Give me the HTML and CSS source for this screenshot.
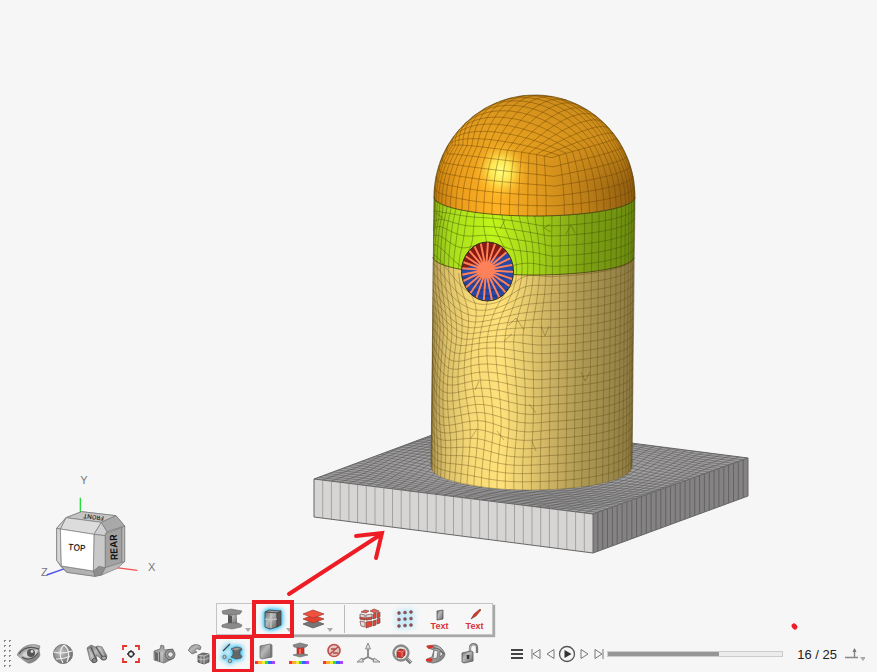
FILE: index.html
```html
<!DOCTYPE html>
<html lang="en">
<head>
  <meta charset="UTF-8">
  <meta name="viewport" content="width=device-width, initial-scale=1.0">
  <title>Model Viewer</title>
  <link rel="stylesheet" href="styles.css">
</head>
<body>
  <main class="viewer">
    <section class="stage">
      <svg class="scene" viewBox="0 0 877 600" role="img" aria-label="Meshed vessel model on a base plate">
        <defs>
          <linearGradient id="tan" gradientUnits="userSpaceOnUse" x1="432" y1="0" x2="635" y2="0">
            <stop offset="0" stop-color="#b39a55"/><stop offset=".07" stop-color="#dcc16b"/><stop offset=".2" stop-color="#f8da76"/>
            <stop offset=".34" stop-color="#ffe17b"/><stop offset=".46" stop-color="#e8cc6f"/><stop offset=".58" stop-color="#ccb263"/>
            <stop offset=".74" stop-color="#ae9953"/><stop offset="1" stop-color="#8b7943"/>
          </linearGradient>
          <linearGradient id="green" gradientUnits="userSpaceOnUse" x1="432" y1="0" x2="635" y2="0">
            <stop offset="0" stop-color="#8db51a"/><stop offset=".1" stop-color="#abdf1d"/><stop offset=".3" stop-color="#c0f51b"/>
            <stop offset=".5" stop-color="#a5d31b"/><stop offset=".75" stop-color="#7da012"/><stop offset="1" stop-color="#6c8b10"/>
          </linearGradient>
          <linearGradient id="orange" gradientUnits="userSpaceOnUse" x1="434" y1="190" x2="636" y2="175">
            <stop offset="0" stop-color="#c07c10"/><stop offset=".12" stop-color="#eb9d1c"/><stop offset=".3" stop-color="#ffb324"/>
            <stop offset=".5" stop-color="#e39c1e"/><stop offset=".75" stop-color="#ba7d18"/><stop offset="1" stop-color="#8d5b10"/>
          </linearGradient>
          <linearGradient id="domeTop" x1="0" y1="0" x2="0" y2="1">
            <stop offset="0" stop-color="#cc8c1b" stop-opacity=".85"/><stop offset=".35" stop-color="#e09c1e" stop-opacity=".7"/><stop offset=".75" stop-color="#dc991d" stop-opacity="0"/>
          </linearGradient>
          <radialGradient id="shine">
            <stop offset="0" stop-color="#ffff80"/><stop offset=".4" stop-color="#fff05a" stop-opacity=".85"/><stop offset="1" stop-color="#ffb52a" stop-opacity="0"/>
          </radialGradient>
          <clipPath id="greenClip"><path d="M434 197A100.500 19 0 0 0 635 197L634 257A100.500 18 0 0 1 433 257Z"/></clipPath>
          <clipPath id="tanClip"><path d="M433 257A100.500 18 0 0 0 634 257L632 467A100.500 23 0 0 1 431 467Z"/></clipPath>
          <clipPath id="plateClip"><path d="M314 479L467 422L748 458L593 514Z"/></clipPath>
          <clipPath id="holeClip"><ellipse cx="487.500" cy="271.500" rx="26" ry="29.500"/></clipPath>
        </defs>

        <g class="plate">
          <path class="plate-top" d="M314 479L467 422L748 458L593 514Z"/>
          <path class="plate-front" d="M314 479L593 514V553L314 517Z"/>
          <path class="plate-side" d="M593 514L748 458V496L593 553Z"/>
          <g clip-path="url(#plateClip)"><path id="plateMesh" class="mesh mesh-plate"/></g>
          <path id="frontMesh" class="mesh mesh-front"/>
          <path id="sideMesh" class="mesh mesh-side"/>
          <path class="plate-edge" d="M314 517V479L593 514L748 458V496L593 553V514M314 517L593 553M314 479L467 422L748 458"/>
        </g>

        <g class="vessel">
          <path fill="url(#tan)" d="M433 250H634L632 467A100.500 23 0 0 1 431 467Z"/>
          <g clip-path="url(#tanClip)"><path id="tanMesh" class="mesh mesh-tan"/></g>
          <path fill="url(#green)" d="M434 190H635L634 257A100.500 18 0 0 1 433 257Z"/>
          <g clip-path="url(#greenClip)"><path id="greenMesh" class="mesh mesh-green"/></g>
          <path fill="url(#orange)" d="M434 197C434 141 479 95 535 95S635 141 635 197A100.500 19 0 0 1 434 197Z"/>
          <path fill="url(#domeTop)" d="M434 197C434 141 479 95 535 95S635 141 635 197A100.500 19 0 0 1 434 197Z"/>
          <ellipse cx="501" cy="171" rx="27" ry="29" fill="url(#shine)"/>
          <path id="domeMesh" class="mesh mesh-dome"/>
          <path class="seam" d="M434 197A100.500 19 0 0 0 635 197M433 257A100.500 18 0 0 0 634 257"/>
          <path class="outline" d="M431 467L434 197C434 141 479 95 535 95S635 141 635 197L632 467"/>
        </g>

        <g clip-path="url(#holeClip)">
          <rect x="460" y="240" width="56" height="64" fill="#2948a5"/>
          <path fill="#851b12" d="M460 240H516L504 254L487 262L476 264L460 270Z"/>
          <path class="hole-rows" d="M460 278H516M460 284H516M460 290H516M460 296H516"/>
          <path id="spokes" class="spokes"/>
          <circle cx="486" cy="270" r="8.500" fill="#ff8159"/>
        </g>
        <ellipse class="hole-edge" cx="487.500" cy="271.500" rx="26" ry="29.500"/>

        <g class="view-cube" transform="translate(30 465) scale(.33333)">
          <path stroke="#23e03a" d="M151 98V144"/>
          <path stroke="#f4504c" d="M258 308L322 316"/>
          <path stroke="#5050f0" d="M50 330L104 311"/>
          <path class="facet" fill="#b9b9b9" d="M155 140L258 152L284 183V290L262 310L215 330L195 334L110 322L92 304L80 286V190L108 158Z"/>
          <path class="facet" fill="#c5c5c5" d="M155 140L258 152L214 172L108 158Z"/>
          <path class="facet" fill="#dcdcdc" d="M108 158L214 172L192 208L91 192Z"/>
          <path class="facet" fill="#cfcfcf" d="M214 172L231 200L226 212L192 208Z"/>
          <path class="facet" fill="#a9a9a9" d="M214 172L258 152L284 183L231 200Z"/>
          <path class="facet" fill="#c9c9c9" d="M192 208L226 212V308L190 318Z"/>
          <path class="facet" fill="#a2a2a2" d="M226 206L276 187V292L226 308Z"/>
          <path class="facet" fill="#bcbcbc" d="M276 187L284 183V290L276 292Z"/>
          <path class="facet" fill="#d0d0d0" d="M108 158L91 192L80 190Z"/>
          <path class="facet" fill="#d6d6d6" d="M80 190L91 192L94 303L80 286Z"/>
          <path class="facet" fill="#b2b2b2" d="M94 303L190 318L195 334L110 322Z"/>
          <path class="facet" fill="#8e8e8e" d="M190 318L207 304L226 308L215 330L195 334Z"/>
          <path class="facet" fill="#fff" d="M91 192L192 208L190 318L94 303Z"/>
          <text class="face-name" x="114" y="257" transform="rotate(4 140 250)">TOP</text>
          <text class="face-name face-side" transform="translate(263 285) rotate(-92)">REAR</text>
          <text class="face-name face-top" transform="translate(222 154) rotate(187)">FRONT</text>
          <text class="axis" x="151" y="58">Y</text>
          <text class="axis" x="354" y="317">X</text>
          <text class="axis" x="33" y="333">Z</text>
        </g>
      </svg>
    </section>

    <div class="submenu" role="toolbar" aria-label="Element display">
      <button class="split" type="button" aria-label="1D elements">
        <span class="icon"><svg viewBox="0 0 24 24"><path fill="url(#steel)" d="M8 5h9v13H8z"/><path fill="#555" d="M8 8l4 1v10l-4-1z"/><path fill="#8a8a8a" stroke="#666" stroke-width=".6" d="M2 4l9-2 11 2-2 3-8 1-9-1zM2 18l6-2h10l4 2-1 2-9 2-10-2z"/></svg></span>
      </button>
      <button class="split" type="button" aria-label="2D elements">
        <span class="icon active marked"><svg viewBox="0 0 24 24"><path fill="#999" stroke="#444" stroke-width=".8" d="M4 5l4-2 12 1-4 2z"/><path fill="url(#steel)" stroke="#444" stroke-width=".8" d="M4 5l12 1v14l-7 2-5-2z"/><path fill="#555" stroke="#444" stroke-width=".8" d="M16 6l4-2v14l-4 2z"/><path stroke="#d0d0d0" d="M4 12l6 1 6-1M10 6v15" fill="none"/></svg></span>
      </button>
      <button class="split" type="button" aria-label="Layers">
        <span class="icon"><svg viewBox="0 0 24 24"><path fill="#777" stroke="#555" stroke-width=".7" d="M1 17l10-4 11 4-11 4z"/><path fill="#e4412f" stroke="#9c3a31" stroke-width=".7" d="M1 12l10-4 11 4-11 4z"/><path fill="#f0523f" stroke="#9c3a31" stroke-width=".7" d="M1 7l10-4 11 4-11 4z"/></svg></span>
      </button>
      <span class="divider"></span>
      <button class="plain" type="button" aria-label="Shrink elements">
        <span class="icon"><svg viewBox="0 0 24 24" stroke="#7a4a46" stroke-width=".7"><path fill="#ef5e50" d="M3 5l4-2 4 1-3 2zM12 4l4-2 5 2-4 2z"/><path fill="#dcdcdc" d="M2 7l5 1v5l-5-1zM8 8l6-1v5l-6 1zM2 14l5 1v5l-4-1z"/><path fill="#e34235" d="M8 15l6-1v5l-6 2zM15 7l3-1v5l-3 1zM19 6l3-1v5l-3 1zM15 14l3-1v5l-3 1zM19 12l3-1v5l-3 1zM2 10l5 1v2l-5-1zM8 11l6-1v2l-6 1z"/></svg></span>
      </button>
      <button class="plain" type="button" aria-label="Show nodes">
        <span class="icon active soft"><svg viewBox="0 0 24 24" fill="#a34a4b" stroke="#5b5560" stroke-width=".5"><circle cx="6" cy="6" r="1.500"/><circle cx="12" cy="5.500" r="1.500"/><circle cx="18" cy="5" r="1.500"/><circle cx="6" cy="12.500" r="1.500"/><circle cx="12" cy="12" r="1.500"/><circle cx="18" cy="11.500" r="1.500"/><circle cx="6" cy="19" r="1.500"/><circle cx="12" cy="18.500" r="1.500"/><circle cx="18" cy="18" r="1.500"/></svg></span>
      </button>
      <button class="plain labelled" type="button">
        <svg class="small-icon" viewBox="0 0 12 12"><path fill="url(#steel)" stroke="#444" stroke-width=".7" d="M3 2l6-1v9l-6 1z"/></svg>
        <span>Text</span>
      </button>
      <button class="plain labelled" type="button">
        <svg class="small-icon" viewBox="0 0 12 12"><path fill="#d5392c" stroke="#763a33" stroke-width=".6" d="M11 0L5 5l-3 5 5-3 5-6z"/></svg>
        <span>Text</span>
      </button>
    </div>

    <footer class="toolbar">
      <span class="grip"></span>
      <div class="tools" role="toolbar" aria-label="View">
        <button class="tool" type="button" aria-label="Show or hide"><span class="icon"><svg viewBox="0 0 24 24"><path fill="url(#steel)" stroke="#777" stroke-width=".6" d="M0 13C4 5 13 0 23 4l-1 4 1 5c-2 5-9 9-12 8C7 19 4 16 0 13z"/><path fill="#d4d4d4" d="M5 13c4-5 10-6 16-5-1 6-9 11-16 5z"/><circle cx="14" cy="11" r="4" fill="#555"/><circle cx="15" cy="9.500" r="1.400" fill="#ddd"/><path d="M2 12c5-7 12-8 20-5M5 15c5 4 12 2 16-4" fill="none" stroke="#555" stroke-width="1.200"/></svg></span></button>
        <button class="tool" type="button" aria-label="Global view"><span class="icon"><svg viewBox="0 0 24 24"><circle cx="12" cy="12" r="9.500" fill="url(#ball)" stroke="#777"/><path fill="none" stroke="#eee" stroke-width="1.200" d="M3 10c6 2 12 1 18-1M13 3c-5 5-5 12-1 18M13 3c5 4 6 11 3 17M5 17c5 0 10-1 14-3"/></svg></span></button>
        <button class="tool" type="button" aria-label="Find"><span class="icon"><svg viewBox="0 0 24 24"><path fill="url(#steel)" stroke="#666" stroke-width=".7" d="M2 6l4-3 4 2 3-1 4 1 5 9-1 3-4 1-3-3-3-2 1 6-4 2-3-3z"/><path stroke="#555" stroke-width="1.300" d="M6 5l5 12M11 5l7 11" fill="none"/><path stroke="#ccc" d="M4 7l4 10M14 6l5 8" fill="none"/><ellipse cx="9.500" cy="18.500" rx="2.500" ry="2" fill="#888" stroke="#555"/><ellipse cx="19" cy="16" rx="2.500" ry="2" fill="#aaa" stroke="#555"/></svg></span></button>
        <button class="tool" type="button" aria-label="Fit model"><span class="icon"><svg viewBox="0 0 24 24" fill="none"><path stroke="#e5342c" stroke-width="1.800" d="M4 8V4h4M16 4h4v4M4 16v4h4M16 20h4v-4"/><circle cx="12" cy="12" r="2.500" stroke="#333" stroke-width="1.300"/><path stroke="#333" stroke-width="1.300" d="M12 8V10M12 14v2M8 12H10M14 12h2"/></svg></span></button>
        <button class="tool" type="button" aria-label="Capture image"><span class="icon"><svg viewBox="0 0 24 24"><path fill="url(#steel)" stroke="#666" stroke-width=".7" d="M1 9l6-2 1-4 3 1v4l9-1 1 9-10 5-10-3z"/><path fill="#666" d="M2 10l3 1v8l-3-1zM6 10h1v10H6z"/><circle cx="17" cy="12.500" r="5" fill="#999" stroke="#555" stroke-width=".8"/><circle cx="17.500" cy="12.500" r="2.800" fill="#e5e5e5" stroke="#666"/><path stroke="#ccc" d="M9 10v10"/></svg></span></button>
        <button class="tool" type="button" aria-label="Rotate view"><span class="icon"><svg viewBox="0 0 24 24"><path fill="url(#steel)" stroke="#666" stroke-width=".7" d="M2 8C3 2 12 1 14 5l-1 3c-3-2-5-1-5 1l2 1-5 2-4-4z"/><path fill="#777" stroke="#444" stroke-width=".8" d="M11 13l5-2 6 1v8l-5 2-6-2z"/><path fill="none" stroke="#ccc" stroke-width=".8" d="M11 13l6 1 5-2M17 14v8M11 17l6 1 5-2M14 13v8"/></svg></span></button>
        <button class="tool" type="button" aria-label="Element representation"><span class="icon active marked"><svg viewBox="0 0 24 24"><path stroke="#444" stroke-width="1.300" d="M2 9l7-7"/><circle cx="3.500" cy="15" r="1.700" fill="#bbb" stroke="#666" stroke-width=".8"/><circle cx="9" cy="19" r="1.700" fill="#bbb" stroke="#666" stroke-width=".8"/><path fill="#666" stroke="#444" stroke-width=".6" d="M10 7l5-2 5 1 1 2-2 1v4l2 1-1 2-5 1-5-2 2-2v-4z"/><path fill="#999" d="M10.500 7.500l5-2 4 1-4 2z"/></svg></span></button>
        <button class="tool spectrum" type="button" aria-label="Colour by property"><span class="icon"><svg viewBox="0 0 24 24"><path fill="url(#steel)" stroke="#666" stroke-width=".7" d="M5 4l10-2 2 1v12L7 17l-2-1z"/><path fill="#777" d="M15 2l2 1v12l-2 1z"/></svg></span></button>
        <button class="tool spectrum" type="button" aria-label="Colour by section"><span class="icon"><svg viewBox="0 0 24 24"><path fill="#d63226" stroke="#7d3029" stroke-width=".6" d="M8 4h7v9H8z"/><path fill="#888" stroke="#666" stroke-width=".6" d="M4 3l7-2 8 2-2 2-6 1-6-1zM4 13l4-1h8l3 1-8 2z"/><path fill="#ee6e5f" d="M10 7h2v5h-2z"/></svg></span></button>
        <button class="tool spectrum" type="button" aria-label="Colour off"><span class="icon"><svg viewBox="0 0 24 24"><circle cx="11" cy="8.500" r="6" fill="#e0c6c3" stroke="#c4504b" stroke-width="1.700"/><path stroke="#b84a46" stroke-width="1.500" fill="none" d="M7 12L15 5M8 7h5M10 11h5"/></svg></span></button>
        <button class="tool" type="button" aria-label="Coordinate systems"><span class="icon"><svg viewBox="0 0 24 24"><path d="M11 6v9l-8 4M11 15l8 4" fill="none" stroke="#888" stroke-width="1.800"/><path fill="#ddd" stroke="#777" stroke-width=".8" d="M11 1l2.500 6h-5zM0 20l5-4 1.500 4zM23 20l-6-4-1 4z"/></svg></span></button>
        <button class="tool" type="button" aria-label="Inspect"><span class="icon"><svg viewBox="0 0 24 24"><path stroke="#777" stroke-width="3.500" d="M15 16l5 5"/><path stroke="#ccc" d="M16 16l5 5"/><circle cx="10" cy="11" r="7.500" fill="#e4e4e4" stroke="#888" stroke-width="2.300"/><path fill="#cf352b" stroke="#6b2d28" stroke-width=".7" d="M6 9l3-2 5 1v5l-3 3-5-1z"/><path stroke="#f09990" stroke-width=".8" fill="none" d="M6 9l5 1 3-2M11 10v5"/></svg></span></button>
        <button class="tool" type="button" aria-label="Measure"><span class="icon"><svg viewBox="0 0 24 24"><path fill="url(#steel)" stroke="#666" stroke-width=".8" d="M2 4l8-1c5 1 8 4 10 9-1 5-5 8-12 9l-6-1v-3l5-2 2-7-6-2z"/><path fill="#eee" stroke="#666" stroke-width=".8" d="M9 8l4 1-1 7-4 1zM15 9l3 3-3 3z"/><path fill="#d8342b" d="M1 4l6-1 2 2-5 2zM1 17l5-1 2 2-2 2-5-1z"/><path fill="none" stroke="#555" d="M8 6c5 0 8 2 11 6"/></svg></span></button>
        <button class="tool" type="button" aria-label="Lock view"><span class="icon"><svg viewBox="0 0 24 24"><path d="M11 10V6c0-5 7-5 7 0v5" fill="none" stroke="#777" stroke-width="2.300"/><path d="M11 9V6c0-4 6-4 6-1" fill="none" stroke="#ddd" stroke-width=".8"/><path fill="url(#steel)" stroke="#555" stroke-width=".8" d="M3 11l9-2 2 1v9l-9 2-2-1z"/><path fill="#333" d="M7.500 13h3l-.5 4h-2z"/></svg></span></button>
      </div>

      <div class="player">
        <button class="menu" type="button" aria-label="Menu"><svg viewBox="0 0 12 12"><path stroke="#444" stroke-width="2" d="M0 2h12M0 6h12M0 10h12"/></svg></button>
        <button class="step" type="button" aria-label="First"><svg viewBox="0 0 12 12"><path d="M2 1v10M10 1.500v9L3 6z"/></svg></button>
        <button class="step" type="button" aria-label="Previous"><svg viewBox="0 0 12 12"><path d="M9 1.500v9L2 6z"/></svg></button>
        <button class="play" type="button" aria-label="Play"><svg viewBox="0 0 18 18"><circle cx="9" cy="9" r="7.500" fill="none" stroke="#555" stroke-width="1.300"/><path fill="#333" d="M6.500 5l7 4-7 4z"/></svg></button>
        <button class="step" type="button" aria-label="Next"><svg viewBox="0 0 12 12"><path d="M3 1.500v9L10 6z"/></svg></button>
        <button class="step" type="button" aria-label="Last"><svg viewBox="0 0 12 12"><path d="M10 1v10M2 1.500v9L9 6z"/></svg></button>
        <input class="timeline" type="range" min="0" max="25" value="16" aria-label="Frame">
        <span class="frame">16 / 25</span>
        <button class="marker" type="button" aria-label="Frame options"><svg viewBox="0 0 20 14"><path d="M0 10.500h13M9.500 10V2" stroke="#888" stroke-width="1.400"/><path fill="#777" d="M9.500 1l2 4h-4z"/><path fill="#aaa" d="M15 10h6l-3 4z"/></svg></button>
      </div>
    </footer>

    <svg class="notes" viewBox="0 0 877 672" aria-hidden="true">
      <path d="M289 594L380 535M356 536L382 533L376 558"/>
      <path class="dot" d="M794 626l1 1"/>
    </svg>
  </main>

  <svg class="defs" width="0" height="0" aria-hidden="true">
    <defs>
      <linearGradient id="steel" x1="0" y1="0" x2="1" y2="1"><stop offset="0" stop-color="#707070"/><stop offset=".4" stop-color="#b8b8b8"/><stop offset="1" stop-color="#666"/></linearGradient>
      <radialGradient id="ball" cx=".4" cy=".4" r=".7"><stop offset="0" stop-color="#c5c5c5"/><stop offset="1" stop-color="#666"/></radialGradient>
    </defs>
  </svg>
  <script src="mesh.js"></script>
</body>
</html>
```

FILE: styles.css
```css
:root {
  --bg: #f6f6f6;
  --mark: #ee1c24;
  --glow: #35c4f8;
}

* {
  box-sizing: border-box;
}

body {
  margin: 0;
  background: var(--bg);
  color: #222;
  font-family: "Liberation Sans", Arial, sans-serif;
  font-size: 13px;
  overflow: hidden;
}

button {
  display: flex;
  align-items: center;
  justify-content: center;
  padding: 0;
  border: 0;
  background: none;
  color: inherit;
  font: inherit;
  cursor: pointer;
}

svg {
  display: block;
}

.viewer {
  position: relative;
  display: flex;
  flex-direction: column;
  min-height: 100vh;
}

.stage {
  flex: 1;
}

.scene {
  width: 100%;
}

/* model */
.mesh {
  fill: none;
  stroke-width: 1;
}

.mesh-tan { stroke: rgba(95, 75, 20, 0.38); }
.mesh-green { stroke: rgba(60, 82, 5, 0.42); }
.mesh-dome { stroke: rgba(100, 60, 0, 0.42); }
.mesh-plate { stroke: rgba(70, 70, 70, 0.42); }
.mesh-front { stroke: #a2a2a2; }
.mesh-side { stroke: #636363; }

.plate-top { fill: #a09e9f; }
.plate-front { fill: #d6d5d4; }
.plate-side { fill: #848282; }

.plate-edge {
  fill: none;
  stroke: #666;
}

.seam {
  fill: none;
  stroke: rgba(70, 62, 15, 0.8);
}

.outline {
  fill: none;
  stroke: rgba(80, 65, 25, 0.5);
}

.hole-edge {
  fill: none;
  stroke: #36331b;
}

.hole-rows {
  stroke: #1d3279;
}

.spokes {
  stroke: #ff8159;
  stroke-width: 2;
}

/* orientation cube */
.view-cube {
  stroke-width: 4;
}

.facet {
  stroke: #777;
  stroke-width: 2;
  stroke-linejoin: round;
}

.face-name {
  fill: #111;
  font-family: Inter, sans-serif;
  font-size: 26px;
  font-weight: 500;
}

.face-side {
  font-size: 29px;
  font-weight: 600;
}

.face-top {
  font-size: 18px;
}

.axis {
  fill: #777;
  font-size: 33px;
}

/* icons */
.icon {
  position: relative;
  display: block;
  width: 24px;
  height: 24px;
}

.active svg {
  filter: drop-shadow(0 0 2px var(--glow)) drop-shadow(0 0 2px var(--glow));
}

.soft svg {
  filter: drop-shadow(0 0 3px var(--glow));
}

.marked::after {
  content: "";
  position: absolute;
  inset: -7px -9px;
  z-index: 2;
  border: 4px solid var(--mark);
}

/* floating row */
.submenu {
  display: flex;
  align-self: flex-start;
  height: 32px;
  margin-left: 216px;
  border: 1px solid #c4c4c4;
  background: #f7f7f7;
  box-shadow: 2px 2px 1px #a8a8a8;
}

.split {
  position: relative;
  width: 41px;
  padding-left: 3px;
  justify-content: flex-start;
}

.split::after {
  content: "";
  position: absolute;
  right: 7px;
  bottom: 2px;
  border: 3px solid transparent;
  border-top: 4px solid #aaa;
  border-bottom: 0;
}

.divider {
  width: 1px;
  margin: 1px 7px 1px 4px;
  background: #bbb;
}

.plain {
  width: 35px;
}

.labelled {
  flex-direction: column;
  color: #d9303a;
  font-size: 9px;
  font-weight: bold;
  line-height: 10px;
}

.small-icon {
  width: 12px;
  height: 12px;
  margin-top: 2px;
}

/* bottom bar */
.toolbar {
  display: flex;
  align-items: center;
  height: 36px;
  margin-top: 1px;
}

.grip {
  width: 10px;
  height: 32px;
  margin: 0 0 0 2px;
  background: radial-gradient(circle, #888 1px, transparent 1px) 0 0 / 5px 5px;
}

.tools {
  display: flex;
}

.tool {
  position: relative;
  width: 34px;
  height: 36px;
}

.spectrum::after {
  content: "";
  position: absolute;
  left: 5px;
  bottom: 8px;
  width: 20px;
  height: 3px;
  background: linear-gradient(90deg, #f33 0 16%, #fa3 16% 33%, #ee3 33% 50%, #3d4 50% 66%, #36f 66% 83%, #a4f 83%);
}

.player {
  display: flex;
  flex: 1;
  align-items: center;
  padding: 0 12px 0 23px;
}

.menu {
  width: 12px;
  margin-right: 5px;
}

.menu svg {
  width: 12px;
}

.step {
  width: 15px;
}

.step svg {
  width: 12px;
  height: 12px;
  fill: none;
  stroke: #777;
}

.play svg {
  width: 18px;
  height: 18px;
}

.timeline {
  flex: 1;
  min-width: 60px;
  height: 6px;
  margin: 0 14px 0 1px;
  border: 1px solid #ccc;
  background: linear-gradient(90deg, #969696 64%, #ececec 64%);
  appearance: none;
}

.timeline::-webkit-slider-thumb {
  width: 1px;
  height: 4px;
  appearance: none;
}

.frame {
  margin-right: 8px;
  white-space: nowrap;
}

.marker svg {
  width: 20px;
  height: 14px;
}

/* hand drawn notes over the view */
.notes {
  position: absolute;
  top: 0;
  left: 0;
  width: 100%;
  fill: none;
  stroke: var(--mark);
  stroke-width: 4;
  stroke-linecap: round;
  pointer-events: none;
}

.dot {
  stroke-width: 5;
}

.defs {
  position: absolute;
}
```

FILE: mesh.js
```js
const rad = Math.PI / 180;

function setPath(id, lines) {
  const d = lines.map(line => "M" + line.map(p => p[0].toFixed(1) + " " + p[1].toFixed(1)).join("L")).join("");
  document.getElementById(id).setAttribute("d", d);
}

function lerp(a, b, t) {
  return [a[0] + (b[0] - a[0]) * t, a[1] + (b[1] - a[1]) * t];
}

// sample fn(t) for t in 0..1
function curve(fn, steps) {
  const line = [];
  for (let i = 0; i <= steps; i++) line.push(fn(i / steps));
  return line;
}

// push mesh lines away from the nozzle opening
function aroundHole(p) {
  const dx = p[0] - 487.5;
  const dy = (p[1] - 271.5) / 1.13;
  const r = Math.hypot(dx, dy) || 0.1;
  const reach = 68;
  if (r > reach) return p;
  const k = (18 + r * (1 - 18 / reach)) / r;
  return [487.5 + dx * k, 271.5 + dy * k * 1.13];
}

// point on the shell, deg from -90 (left) to 90 (right)
function shell(deg, y) {
  const free = Math.max(0, Math.min(1, (10 - deg) / 45)) * Math.max(0, Math.min(1, (470 - y) / 60)) * Math.min(1, (y - 190) / 40);
  const a = deg + free * 3 * Math.sin(y / 27 + deg / 20);
  const h = y + free * 7 * Math.sin(deg / 11 + y / 55);
  const t = (y - 197) / 270;
  const x = 534.5 - 3 * t + 100.5 * Math.sin(a * rad);
  return aroundHole([x, h + (19 + 4 * t) * Math.cos(a * rad)]);
}

function shellMesh(top, bottom, rows) {
  const lines = [];
  for (let a = -90; a <= 90; a += 5) {
    lines.push(curve(t => shell(a, top - 6 + (bottom - top + 12) * t), 60));
  }
  for (let i = 0; i <= rows; i++) {
    const y = top + (bottom - top) * i / rows;
    lines.push(curve(t => shell(-90 + 180 * t, y), 80));
  }
  return lines;
}

// short lines where the free mesh splits a quad
const splits = [
  [[545, 336], [541, 326]], [[545, 336], [549, 326]],
  [[585, 381], [581, 372]], [[585, 381], [590, 372]],
  [[536, 413], [529, 404]], [[536, 451], [532, 441]],
  [[479, 381], [475, 390]], [[477, 429], [471, 438]],
  [[497, 431], [504, 440]], [[508, 326], [516, 318]],
  [[516, 318], [524, 330]], [[504, 341], [512, 334]]
];
setPath("tanMesh", shellMesh(257, 467, 25).concat(splits));
setPath("greenMesh", shellMesh(197, 257, 6).concat([
  [[544, 228], [550, 224]], [[544, 228], [551, 232]],
  [[566, 234], [571, 225]], [[571, 225], [575, 233]],
  [[436, 213], [443, 218]], [[500, 229], [505, 220]]
]));

// dome: a square cap with one corner to the front, then rings down to the rim
function dome(phi, az) {
  return {
    p: [534.5 + 100.5 * Math.sin(phi) * Math.sin(az), 197 - 100 * Math.cos(phi) + 19 * Math.sin(phi) * Math.cos(az)],
    seen: Math.sin(phi) * Math.cos(az) * 0.98 + Math.cos(phi) * 0.19 > 0
  };
}

function cap(a, b) {
  const x = Math.tan(a * 45 * rad);
  const y = Math.tan(b * 45 * rad);
  const round = 1 - 0.16 * a * a * b * b;
  return [Math.atan(Math.hypot(x, y) * round / 0.78), Math.atan2(y, x) - 33 * rad];
}

function visible(fn, out) {
  let line = [];
  for (let i = 0; i <= 60; i++) {
    const q = fn(i / 60);
    const s = dome(q[0], q[1]);
    if (s.seen) line.push(s.p);
    if ((!s.seen || i === 60) && line.length) {
      if (line.length > 1) out.push(line);
      line = [];
    }
  }
}

const domeLines = [];
const n = 17;
const rings = 6;
for (let i = 0; i <= n; i++) {
  const u = -1 + 2 * i / n;
  visible(t => cap(u, -1 + 2 * t), domeLines);
  visible(t => cap(-1 + 2 * t, u), domeLines);
}
const sides = [t => cap(1, t), t => cap(t, 1), t => cap(-1, t), t => cap(t, -1)];
sides.forEach(side => {
  for (let i = 0; i < n; i++) {
    const edge = side(-1 + 2 * i / n);
    visible(t => [edge[0] + (90 * rad - edge[0]) * t, edge[1]], domeLines);
  }
  for (let k = 1; k < rings; k++) {
    visible(t => {
      const edge = side(-1 + 2 * t);
      return [edge[0] + (90 * rad - edge[0]) * k / rings, edge[1]];
    }, domeLines);
  }
});
setPath("domeMesh", domeLines);

// base plate
const left = [314, 479];
const front = [593, 514];
const right = [748, 458];
const back = [467, 422];
const plate = [];

function onPlate(u, v) {
  const p = lerp(lerp(left, front, u), lerp(back, right, u), v);
  const dx = p[0] - 532;
  const dy = (p[1] - 467) * 3.9;
  const r = Math.hypot(dx, dy) || 1;
  const limit = 170;
  if (r > limit) return p;
  const k = (50 + r * (1 - 50 / limit)) / r;
  return [532 + dx * k, 467 + dy * k / 3.9];
}

for (let i = 0; i <= 32; i++) {
  plate.push(curve(t => onPlate(i / 32, t), 60));
  plate.push(curve(t => onPlate(t, i / 32), 60));
}
setPath("plateMesh", plate);

const frontLines = [];
const sideLines = [];
for (let i = 1; i < 32; i++) {
  frontLines.push([lerp(left, front, i / 32), lerp([314, 517], [593, 553], i / 32)]);
  sideLines.push([lerp(front, right, i / 32), lerp([593, 553], [748, 496], i / 32)]);
}
setPath("frontMesh", frontLines);
setPath("sideMesh", sideLines);

// nozzle spokes
const spokes = [];
for (let a = 4; a < 364; a += 15) {
  spokes.push([[486, 270], [486 + 34 * Math.cos(a * rad), 270 + 34 * Math.sin(a * rad)]]);
}
setPath("spokes", spokes);
```
